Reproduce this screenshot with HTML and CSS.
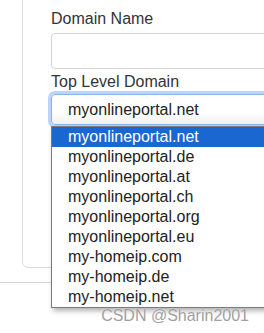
FILE: index.html
```html
<!DOCTYPE html>
<html lang="en">
<head>
    <meta charset="UTF-8">
    <meta name="viewport" content="width=device-width, initial-scale=1.0">
    <title>Domain Settings</title>
    <link rel="stylesheet" href="styles.css">
</head>
<body>

    <!-- Form card -->
    <div class="card">
        <label class="field-label">Domain Name</label>
        <div class="text-input"></div>

        <label class="field-label">Top Level Domain</label>
        <div class="select-wrap">
            <div class="select-box">myonlineportal.net</div>

            <!-- Open dropdown -->
            <ul class="options">
                <li class="selected">myonlineportal.net</li>
                <li>myonlineportal.de</li>
                <li>myonlineportal.at</li>
                <li>myonlineportal.ch</li>
                <li>myonlineportal.org</li>
                <li>myonlineportal.eu</li>
                <li>my-homeip.com</li>
                <li>my-homeip.de</li>
                <li>my-homeip.net</li>
            </ul>
        </div>
    </div>

    <!-- Next panel -->
    <div class="next-panel"></div>

    <span class="watermark">CSDN @Sharin2001</span>

</body>
</html>
```

FILE: styles.css
```css
body {
    font-family: "Liberation Sans", Arial, sans-serif;
    margin: 0;
    padding: 0;
    background-color: #fff;
    color: #333;
    overflow: hidden;
    height: 333px;
    position: relative;
}

/* Card cut off at top and right */
.card {
    margin: -10px -20px 0 22px;
    padding: 18px 0 142px 28px;
    border: 1px solid #dcdcdc;
    border-radius: 6px;
}

.field-label {
    display: block;
    font-size: 16px;
    line-height: 20px;
    color: #333;
}

.text-input {
    height: 34px;
    margin: 4px 0 3px;
    border: 1px solid #d4d4d4;
    border-radius: 4px;
}

/* Select with its popup list */
.select-wrap {
    position: relative;
    margin-top: 2px;
}

.select-box {
    height: 29px;
    padding-left: 16px;
    border: 1px solid #8ab4f0;
    border-radius: 4px;
    box-shadow: 0 0 0 3px #bcd4fa;
    background: linear-gradient(#fff 60%, #f0f0f0);
    font-size: 16px;
    line-height: 29px;
    color: #222;
}

.options {
    position: absolute;
    top: 32px;
    left: 0;
    right: 0;
    margin: 0;
    padding: 0;
    list-style: none;
    background-color: #fff;
    border: 1px solid #7a7a7a;
    box-shadow: 2px 3px 5px rgba(0, 0, 0, 0.3);
    z-index: 10;
}

.options li {
    height: 20px;
    padding-left: 16px;
    font-size: 16px;
    line-height: 20px;
    color: #222;
}

.options li.selected {
    background-color: #1a67d2;
    color: #fff;
}

.next-panel {
    margin-top: 14px;
    border-top: 1px solid #d6d6d6;
    height: 60px;
}

.watermark {
    position: absolute;
    right: 15px;
    top: 307px;
    font-size: 16px;
    line-height: 18px;
    color: #a0a0a0;
    text-shadow: 0 0 1px #fff;
    z-index: 20;
}
```
